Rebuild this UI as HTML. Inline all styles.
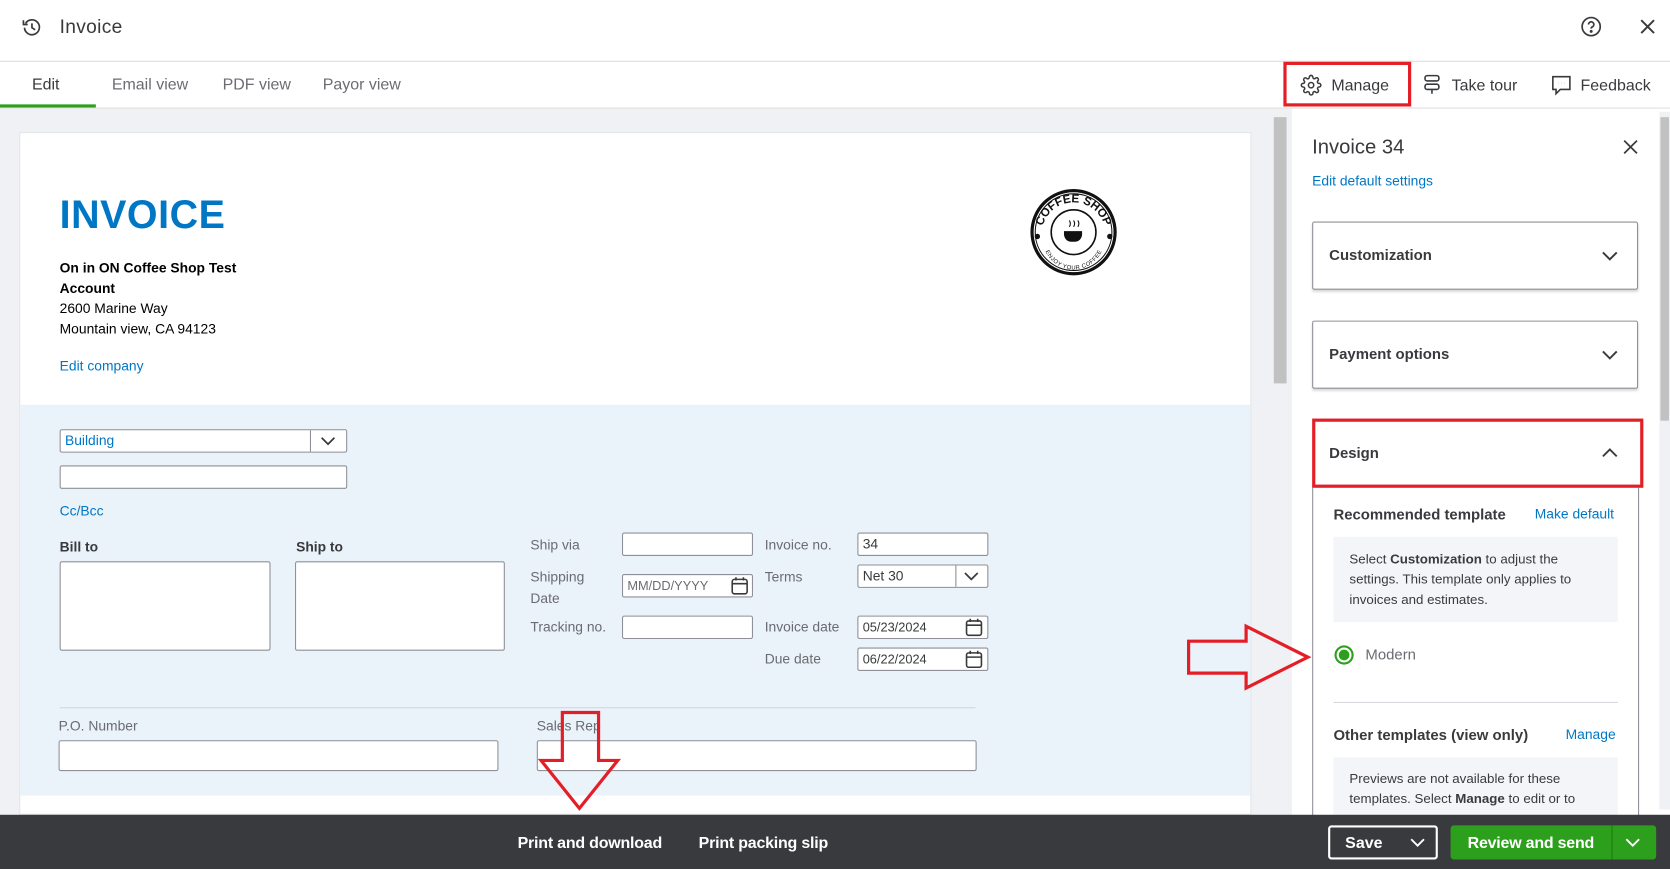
<!DOCTYPE html>
<html><head><meta charset="utf-8"><style>
*{box-sizing:border-box;margin:0;padding:0}
html,body{width:1670px;height:869px;overflow:hidden;background:#fff;font-family:"Liberation Sans",sans-serif;color:#393a3d}
#w{position:absolute;left:0;top:0;width:1568px;height:816px;transform:scale(1.06505);transform-origin:0 0;overflow:hidden}
.a{position:absolute;white-space:nowrap}
.lbl{font-size:13px;color:#6b6c72}
.inp{position:absolute;background:#fff;border:1px solid #8d9096;border-radius:2px;font-size:13px;color:#393a3d;padding-left:4px;line-height:20px}
.box{position:absolute;border:1px solid #8d9096;border-radius:2px;background:#fff;box-shadow:0 2px 2px rgba(0,0,0,.15)}
.blue{color:#0077c5}
</style></head><body><div id="w">
<svg class="a" style="left:20px;top:16px" width="20" height="20" viewBox="0 0 20 20" fill="none" stroke="#393a3d" stroke-width="1.6"><path d="M4 6A7 7 0 1 1 3 10"/><path d="M2 3v4h4"/><path d="M10 6v4l3 2"/></svg>
<div class="a" style="left:56px;top:15px;font-size:18px;letter-spacing:.3px">Invoice</div>
<svg class="a" style="left:1484px;top:15px" width="20" height="20" viewBox="0 0 20 20" fill="none" stroke="#393a3d" stroke-width="1.6"><circle cx="10" cy="10" r="8.5"/><path d="M7.5 8a2.5 2.5 0 1 1 3.5 2.3c-.7.3-1 .8-1 1.6"/><circle cx="10" cy="14.5" r=".6" fill="#393a3d"/></svg>
<svg class="a" style="left:1539px;top:17px" width="16" height="16" viewBox="0 0 16 16" stroke="#393a3d" stroke-width="1.8"><path d="M2 2l12 12M14 2L2 14"/></svg>
<div class="a" style="left:0;top:57px;width:1568px;height:1px;background:#dcdcdc"></div>
<div class="a" style="left:30px;top:71px;font-size:15px">Edit</div>
<div class="a" style="left:105px;top:71px;font-size:15px;color:#6b6c72">Email view</div>
<div class="a" style="left:209px;top:71px;font-size:15px;color:#6b6c72">PDF view</div>
<div class="a" style="left:303px;top:71px;font-size:15px;color:#6b6c72">Payor view</div>
<div class="a" style="left:0;top:98px;width:90px;height:3px;background:#2ca01c"></div>
<div class="a" style="left:1205px;top:58px;width:120px;height:42px;border:3px solid #e41e26"></div>
<svg class="a" style="left:1221px;top:70px" width="20" height="20" viewBox="0 0 24 24" fill="none" stroke="#393a3d" stroke-width="1.7"><circle cx="12" cy="12" r="3"/><path d="M19.4 15a1.65 1.65 0 0 0 .33 1.82l.06.06a2 2 0 1 1-2.83 2.83l-.06-.06a1.65 1.65 0 0 0-1.82-.33 1.65 1.65 0 0 0-1 1.51V21a2 2 0 1 1-4 0v-.09A1.65 1.65 0 0 0 9 19.4a1.65 1.65 0 0 0-1.82.33l-.06.06a2 2 0 1 1-2.83-2.83l.06-.06A1.65 1.65 0 0 0 4.68 15a1.65 1.65 0 0 0-1.51-1H3a2 2 0 1 1 0-4h.09A1.65 1.65 0 0 0 4.6 9a1.65 1.65 0 0 0-.33-1.82l-.06-.06a2 2 0 1 1 2.83-2.83l.06.06A1.65 1.65 0 0 0 9 4.68 1.65 1.65 0 0 0 10 3.17V3a2 2 0 1 1 4 0v.09a1.65 1.65 0 0 0 1 1.51 1.65 1.65 0 0 0 1.82-.33l.06-.06a2 2 0 1 1 2.83 2.83l-.06.06A1.65 1.65 0 0 0 19.4 9a1.65 1.65 0 0 0 1.51 1H21a2 2 0 1 1 0 4h-.09a1.65 1.65 0 0 0-1.51 1z"/></svg>
<div class="a" style="left:1250px;top:72px;font-size:15px">Manage</div>
<svg class="a" style="left:1336px;top:69px" width="18" height="20" viewBox="0 0 18 20" fill="none" stroke="#393a3d" stroke-width="1.5"><rect x="2" y="2" width="13" height="5" rx="2"/><rect x="2" y="10" width="13" height="5" rx="2"/><path d="M8.5 15v4"/></svg>
<div class="a" style="left:1363px;top:72px;font-size:15px">Take tour</div>
<svg class="a" style="left:1456px;top:70px" width="20" height="20" viewBox="0 0 20 20" fill="none" stroke="#393a3d" stroke-width="1.5"><path d="M2 2h16v12H9l-4 4v-4H2z"/><path d="M7 8h.1M10 8h.1M13 8h.1" stroke-width="2"/></svg>
<div class="a" style="left:1484px;top:72px;font-size:15px">Feedback</div>
<div class="a" style="left:0;top:101px;width:1568px;height:1px;background:#dcdcdc"></div>
<div class="a" style="left:0;top:102px;width:1213px;height:663px;background:#f0f1f4"></div>
<div class="a" style="left:1196px;top:110px;width:12px;height:250px;background:#c1c1c1"></div>
<div class="a" style="left:18px;top:124px;width:1157px;height:641px;background:#fff;border:1px solid #e3e4e7"></div>
<div class="a" style="left:19px;top:380px;width:1155px;height:367px;background:#eaf2fa"></div>
<div class="a" style="left:56px;top:181px;font-size:37px;font-weight:bold;color:#0077c5;letter-spacing:.5px">INVOICE</div>
<div class="a" style="left:56px;top:242px;font-size:13px;font-weight:bold;line-height:19px;color:#000">On in ON Coffee Shop Test<br>Account</div>
<div class="a" style="left:56px;top:280px;font-size:13px;line-height:19px;color:#000">2600 Marine Way<br>Mountain view, CA 94123</div>
<div class="a blue" style="left:56px;top:336px;font-size:13px">Edit company</div>
<svg class="a" style="left:966px;top:176px" width="84" height="84" viewBox="0 0 84 84"><defs><path id="tp" d="M12 44A30 30 0 0 1 72 44"/><path id="bp" d="M16 48A26 26 0 0 0 68 48"/></defs><circle cx="42" cy="42" r="39" fill="#fff" stroke="#111" stroke-width="3"/><circle cx="42" cy="42" r="36" fill="none" stroke="#111" stroke-width="1"/><circle cx="42" cy="42" r="21" fill="none" stroke="#111" stroke-width="1.5"/><text font-size="11" font-weight="bold" fill="#111" font-family="Liberation Sans"><textPath href="#tp" startOffset="50%" text-anchor="middle">COFFEE SHOP</textPath></text><text font-size="5.5" fill="#111" font-family="Liberation Sans"><textPath href="#bp" startOffset="50%" text-anchor="middle" dominant-baseline="hanging">ENJOY YOUR COFFEE</textPath></text><path d="M33 41h17v3a7 7 0 0 1-7 7h-3a7 7 0 0 1-7-7z" fill="#111"/><path d="M38 31q2 3 0 6M42 31q2 3 0 6M46 31q2 3 0 6" stroke="#111" fill="none"/><circle cx="8" cy="46" r="2.5" fill="#111"/><circle cx="76" cy="46" r="2.5" fill="#111"/></svg>
<div class="inp blue" style="left:56px;top:403px;width:270px;height:22px">Building</div>
<div class="a" style="left:291px;top:404px;width:1px;height:20px;background:#8d9096"></div>
<svg class="a" style="left:301px;top:408px" width="14" height="12" viewBox="0 0 14 12" fill="none" stroke="#393a3d" stroke-width="1.6"><path d="M1 3l6 6 6-6"/></svg>
<div class="inp" style="left:56px;top:437px;width:270px;height:22px"></div>
<div class="a blue" style="left:56px;top:472px;font-size:13px">Cc/Bcc</div>
<div class="a" style="left:56px;top:506px;font-size:13px;font-weight:bold">Bill to</div>
<div class="a" style="left:278px;top:506px;font-size:13px;font-weight:bold">Ship to</div>
<div class="inp" style="left:56px;top:527px;width:198px;height:84px"></div>
<div class="inp" style="left:277px;top:527px;width:197px;height:84px"></div>
<div class="a lbl" style="left:498px;top:504px">Ship via</div>
<div class="a lbl" style="left:498px;top:532px;line-height:20px">Shipping<br>Date</div>
<div class="a lbl" style="left:498px;top:581px">Tracking no.</div>
<div class="inp" style="left:584px;top:500px;width:123px;height:22px"></div>
<div class="inp" style="left:584px;top:539px;width:123px;height:22px;color:#6b6c72;font-size:12px">MM/DD/YYYY</div>
<div class="inp" style="left:584px;top:578px;width:123px;height:22px"></div>
<div class="a lbl" style="left:718px;top:504px">Invoice no.</div>
<div class="a lbl" style="left:718px;top:534px">Terms</div>
<div class="a lbl" style="left:718px;top:581px">Invoice date</div>
<div class="a lbl" style="left:718px;top:611px">Due date</div>
<div class="inp" style="left:805px;top:500px;width:123px;height:22px">34</div>
<div class="inp" style="left:805px;top:530px;width:123px;height:22px">Net 30</div>
<div class="a" style="left:897px;top:531px;width:1px;height:20px;background:#8d9096"></div>
<svg class="a" style="left:905px;top:535px" width="14" height="12" viewBox="0 0 14 12" fill="none" stroke="#393a3d" stroke-width="1.6"><path d="M1 3l6 6 6-6"/></svg>
<div class="inp" style="left:805px;top:578px;width:123px;height:22px;font-size:12px">05/23/2024</div>
<div class="inp" style="left:805px;top:608px;width:123px;height:22px;font-size:12px">06/22/2024</div>
<svg class="a" style="left:686px;top:541px" width="17" height="18" viewBox="0 0 17 18" fill="none" stroke="#393a3d" stroke-width="1.5"><rect x="1.5" y="3" width="14" height="13.5" rx="2"/><path d="M1.5 7h14M5 1v3M12 1v3"/></svg>
<svg class="a" style="left:906px;top:580px" width="17" height="18" viewBox="0 0 17 18" fill="none" stroke="#393a3d" stroke-width="1.5"><rect x="1.5" y="3" width="14" height="13.5" rx="2"/><path d="M1.5 7h14M5 1v3M12 1v3"/></svg>
<svg class="a" style="left:906px;top:610px" width="17" height="18" viewBox="0 0 17 18" fill="none" stroke="#393a3d" stroke-width="1.5"><rect x="1.5" y="3" width="14" height="13.5" rx="2"/><path d="M1.5 7h14M5 1v3M12 1v3"/></svg>
<div class="a" style="left:56px;top:664px;width:860px;height:1px;background:#d4d7dc"></div>
<div class="a lbl" style="left:55px;top:674px">P.O. Number</div>
<div class="a lbl" style="left:504px;top:674px">Sales Rep</div>
<div class="inp" style="left:55px;top:695px;width:413px;height:29px"></div>
<div class="inp" style="left:504px;top:695px;width:413px;height:29px"></div>
<svg class="a" style="left:505px;top:667px" width="80" height="96" viewBox="0 0 80 96"><path d="M23 2h34v45h18L39 92 3 47h20z" fill="none" stroke="#e41e26" stroke-width="3"/></svg>
<div class="a" style="left:1213px;top:102px;width:355px;height:663px;background:#fff"></div>
<div class="a" style="left:1558px;top:105px;width:10px;height:655px;background:#f0f1f4"></div>
<div class="a" style="left:1559px;top:110px;width:8px;height:285px;background:#c1c1c1"></div>
<div class="a" style="left:1232px;top:128px;font-size:19px">Invoice 34</div>
<svg class="a" style="left:1523px;top:130px" width="16" height="16" viewBox="0 0 16 16" stroke="#393a3d" stroke-width="1.6"><path d="M2 2l12 12M14 2L2 14"/></svg>
<div class="a blue" style="left:1232px;top:162px;font-size:13px">Edit default settings</div>
<div class="box" style="left:1232px;top:208px;width:306px;height:64px"></div>
<div class="a" style="left:1248px;top:231px;font-size:14px;font-weight:bold">Customization</div>
<svg class="a" style="left:1504px;top:234px" width="15" height="12" viewBox="0 0 15 12" fill="none" stroke="#393a3d" stroke-width="1.8"><path d="M1 3l6.5 6.5L14 3"/></svg>
<div class="box" style="left:1232px;top:301px;width:306px;height:64px"></div>
<div class="a" style="left:1248px;top:324px;font-size:14px;font-weight:bold">Payment options</div>
<svg class="a" style="left:1504px;top:327px" width="15" height="12" viewBox="0 0 15 12" fill="none" stroke="#393a3d" stroke-width="1.8"><path d="M1 3l6.5 6.5L14 3"/></svg>
<div class="a" style="left:1232px;top:455px;width:307px;height:320px;border:1px solid #8d9096;border-top:none"></div>
<div class="a" style="left:1232px;top:393px;width:311px;height:65px;border:3px solid #e41e26;background:#fff"></div>
<div class="a" style="left:1248px;top:417px;font-size:14px;font-weight:bold">Design</div>
<svg class="a" style="left:1504px;top:419px" width="15" height="12" viewBox="0 0 15 12" fill="none" stroke="#393a3d" stroke-width="1.8"><path d="M1 9.5L7.5 3 14 9.5"/></svg>
<div class="a" style="left:1252px;top:475px;font-size:14px;font-weight:bold">Recommended template</div>
<div class="a blue" style="left:1441px;top:475px;font-size:13px">Make default</div>
<div class="a" style="left:1252px;top:504px;width:267px;height:80px;background:#f4f5f8"></div>
<div class="a" style="left:1267px;top:516px;font-size:12.5px;line-height:19px;color:#393a3d">Select <b>Customization</b> to adjust the<br>settings. This template only applies to<br>invoices and estimates.</div>
<div class="a" style="left:1253px;top:606px;width:18px;height:18px;border-radius:50%;border:2px solid #2ca01c;background:#fff"></div>
<div class="a" style="left:1257px;top:610px;width:10px;height:10px;border-radius:50%;background:#2ca01c"></div>
<div class="a" style="left:1282px;top:606px;font-size:14px;color:#6b6c72">Modern</div>
<div class="a" style="left:1252px;top:659px;width:267px;height:1px;background:#d4d7dc"></div>
<div class="a" style="left:1252px;top:682px;font-size:14px;font-weight:bold">Other templates (view only)</div>
<div class="a blue" style="left:1470px;top:682px;font-size:13px">Manage</div>
<div class="a" style="left:1252px;top:711px;width:267px;height:60px;background:#f4f5f8"></div>
<div class="a" style="left:1267px;top:722px;font-size:12.5px;line-height:19px">Previews are not available for these<br>templates. Select <b>Manage</b> to edit or to</div>
<svg class="a" style="left:1112px;top:585px" width="120" height="64" viewBox="0 0 120 64"><path d="M4 17h54V3l58 29-58 29V47H4z" fill="none" stroke="#e41e26" stroke-width="3"/></svg>
<div class="a" style="left:0;top:765px;width:1568px;height:51px;background:#393a3d"></div>
<div class="a" style="left:486px;top:783px;font-size:15px;font-weight:bold;color:#fff;letter-spacing:-.2px">Print and download</div>
<div class="a" style="left:656px;top:783px;font-size:15px;font-weight:bold;color:#fff;letter-spacing:-.2px">Print packing slip</div>
<div class="a" style="left:1247px;top:775px;width:103px;height:32px;border:2px solid #fff;border-radius:3px"></div>
<div class="a" style="left:1263px;top:783px;font-size:15px;font-weight:bold;color:#fff">Save</div>
<svg class="a" style="left:1324px;top:785px" width="14" height="12" viewBox="0 0 14 12" fill="none" stroke="#fff" stroke-width="1.8"><path d="M1 3l6 6 6-6"/></svg>
<div class="a" style="left:1362px;top:775px;width:193px;height:32px;background:#2ca01c;border-radius:3px"></div>
<div class="a" style="left:1513px;top:775px;width:1px;height:32px;background:#1e7a12"></div>
<div class="a" style="left:1378px;top:783px;font-size:15px;font-weight:bold;color:#fff;letter-spacing:-.2px">Review and send</div>
<svg class="a" style="left:1526px;top:785px" width="14" height="12" viewBox="0 0 14 12" fill="none" stroke="#fff" stroke-width="1.8"><path d="M1 3l6 6 6-6"/></svg>
</div></body></html>
